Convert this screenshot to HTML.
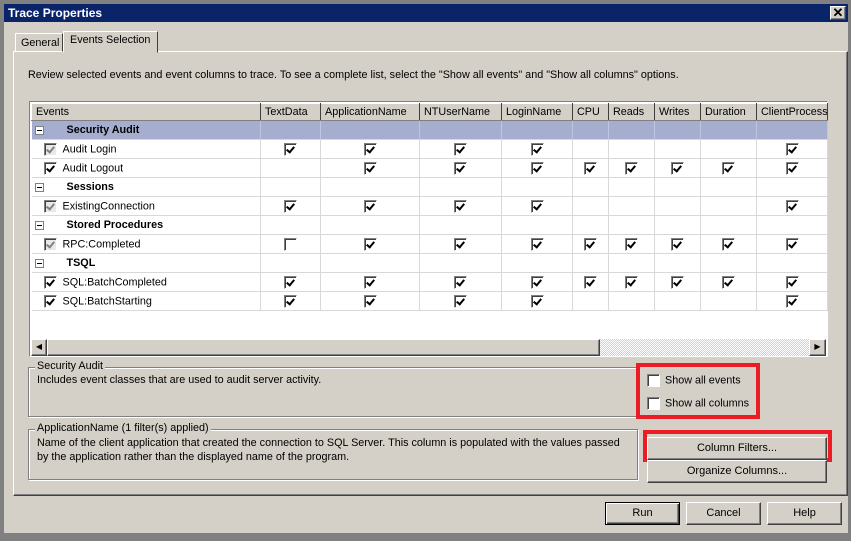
<!DOCTYPE html>
<html><head><meta charset="utf-8"><style>
*{box-sizing:border-box}
body{margin:0;width:851px;height:541px;overflow:hidden;background:#d4d0c8;font-family:"Liberation Sans",sans-serif;font-size:10.8px;color:#000;position:relative}
.a{position:absolute}
.raised{border:1px solid;border-color:#fff #404040 #404040 #fff;box-shadow:inset -1px -1px #808080}
.sunk{border:1px solid;border-color:#808080 #fff #fff #808080}
table{border-collapse:collapse;table-layout:fixed;position:absolute;left:31px;top:103px;width:796px;background:#fff}
td{height:19px;padding:0;border-right:1px solid #d8d8d8;border-bottom:1px solid #d8d8d8;text-align:center;vertical-align:middle;white-space:nowrap;overflow:hidden}
th{height:17px;font-weight:normal;background:#d4d0c8;border:1px solid;border-color:#fff #404040 #808080 #fff;padding:0 0 0 4px;text-align:left;white-space:nowrap;overflow:hidden}
td.n{text-align:left;padding-left:3px}
.cb{display:inline-block;width:13px;height:13px;border:1px solid;border-color:#808080 #fff #fff #808080;box-shadow:inset 1px 1px #404040;background:#fff;position:relative;vertical-align:middle}
.cb.c::after{content:"";position:absolute;left:3px;top:1px;width:3px;height:6px;border:solid #000;border-width:0 2px 2px 0;transform:rotate(40deg)}
.cb.g::after{border-color:#808080}
.cb.g{background:#e8e8e8}
.cat td{font-weight:bold}
.hl td{background:#a6aed0;border-right-color:#c0c6e0}
.pm{display:inline-block;width:9px;height:9px;border:1px solid #808080;background:#fff;position:relative;vertical-align:middle;margin-right:23px}
.pm::after{content:"";position:absolute;left:1px;top:3px;width:5px;height:1px;background:#000}
.btn{position:absolute;height:23px;text-align:center;line-height:21px;font-size:11px}
.gb{position:absolute;border:1px solid #808080;box-shadow:1px 1px #fff, inset 1px 1px #fff}
.gl{position:absolute;top:-8px;left:6px;background:#d4d0c8;padding:0 2px}
.ev{margin-left:5px}
</style></head><body>
<div class="a" style="left:0;top:0;width:851px;height:541px;border:4px solid #808080;border-top-width:4px;border-bottom-width:8px;border-right-width:3px"></div>
<div class="a" style="left:4px;top:4px;width:844px;height:18px;background:#0a246a;color:#fff;font-weight:bold;font-size:12px;line-height:18px;padding-left:4px">Trace Properties</div>
<div class="a raised" style="left:830px;top:6px;width:16px;height:14px;background:#d4d0c8;text-align:center;line-height:11px;font-size:13px;font-weight:bold">✕</div>
<div class="a raised" style="left:13px;top:51px;width:835px;height:445px"></div>
<div class="a" style="left:15px;top:33px;width:48px;height:19px;border:1px solid;border-color:#fff #404040 transparent #fff;padding:3px 0 0 5px">General</div>
<div class="a" style="left:63px;top:31px;width:95px;height:22px;border:1px solid;border-color:#fff #404040 transparent #fff;background:#d4d0c8;padding:2px 0 0 6px">Events Selection</div>
<div class="a" style="left:28px;top:69px">Review selected events and event columns to trace. To see a complete list, select the "Show all events" and "Show all columns" options.</div>
<div class="a sunk" style="left:29px;top:101px;width:799px;height:256px;background:#fff"></div>
<table>
<colgroup><col style="width:229px"><col style="width:60px"><col style="width:99px"><col style="width:82px"><col style="width:71px"><col style="width:36px"><col style="width:46px"><col style="width:46px"><col style="width:56px"><col style="width:71px"></colgroup>
<tr><th>Events</th><th>TextData</th><th>ApplicationName</th><th>NTUserName</th><th>LoginName</th><th>CPU</th><th>Reads</th><th>Writes</th><th>Duration</th><th>ClientProcess</th></tr>
<tr class="cat hl"><td class="n"><span class="pm"></span>Security Audit</td><td></td><td></td><td></td><td></td><td></td><td></td><td></td><td></td><td></td></tr>
<tr><td class="n">&nbsp;&nbsp;&nbsp;<span class="cb c g"></span>&nbsp;&nbsp;<span>Audit Login</span></td><td><span class="cb c"></span></td><td><span class="cb c"></span></td><td><span class="cb c"></span></td><td><span class="cb c"></span></td><td></td><td></td><td></td><td></td><td><span class="cb c"></span></td></tr>
<tr><td class="n">&nbsp;&nbsp;&nbsp;<span class="cb c"></span>&nbsp;&nbsp;<span>Audit Logout</span></td><td></td><td><span class="cb c"></span></td><td><span class="cb c"></span></td><td><span class="cb c"></span></td><td><span class="cb c"></span></td><td><span class="cb c"></span></td><td><span class="cb c"></span></td><td><span class="cb c"></span></td><td><span class="cb c"></span></td></tr>
<tr class="cat"><td class="n"><span class="pm"></span>Sessions</td><td></td><td></td><td></td><td></td><td></td><td></td><td></td><td></td><td></td></tr>
<tr><td class="n">&nbsp;&nbsp;&nbsp;<span class="cb c g"></span>&nbsp;&nbsp;<span>ExistingConnection</span></td><td><span class="cb c"></span></td><td><span class="cb c"></span></td><td><span class="cb c"></span></td><td><span class="cb c"></span></td><td></td><td></td><td></td><td></td><td><span class="cb c"></span></td></tr>
<tr class="cat"><td class="n"><span class="pm"></span>Stored Procedures</td><td></td><td></td><td></td><td></td><td></td><td></td><td></td><td></td><td></td></tr>
<tr><td class="n">&nbsp;&nbsp;&nbsp;<span class="cb c g"></span>&nbsp;&nbsp;<span>RPC:Completed</span></td><td><span class="cb"></span></td><td><span class="cb c"></span></td><td><span class="cb c"></span></td><td><span class="cb c"></span></td><td><span class="cb c"></span></td><td><span class="cb c"></span></td><td><span class="cb c"></span></td><td><span class="cb c"></span></td><td><span class="cb c"></span></td></tr>
<tr class="cat"><td class="n"><span class="pm"></span>TSQL</td><td></td><td></td><td></td><td></td><td></td><td></td><td></td><td></td><td></td></tr>
<tr><td class="n">&nbsp;&nbsp;&nbsp;<span class="cb c"></span>&nbsp;&nbsp;<span>SQL:BatchCompleted</span></td><td><span class="cb c"></span></td><td><span class="cb c"></span></td><td><span class="cb c"></span></td><td><span class="cb c"></span></td><td><span class="cb c"></span></td><td><span class="cb c"></span></td><td><span class="cb c"></span></td><td><span class="cb c"></span></td><td><span class="cb c"></span></td></tr>
<tr><td class="n">&nbsp;&nbsp;&nbsp;<span class="cb c"></span>&nbsp;&nbsp;<span>SQL:BatchStarting</span></td><td><span class="cb c"></span></td><td><span class="cb c"></span></td><td><span class="cb c"></span></td><td><span class="cb c"></span></td><td></td><td></td><td></td><td></td><td><span class="cb c"></span></td></tr>
</table>
<div class="a" style="left:31px;top:339px;width:795px;height:17px;background:repeating-conic-gradient(#d4d0c8 0 25%,#fff 0 50%) 0 0/2px 2px"></div>
<div class="a raised" style="left:31px;top:339px;width:16px;height:17px;background:#d4d0c8;font-size:8px;line-height:14px;text-align:center">◀</div>
<div class="a raised" style="left:47px;top:339px;width:553px;height:17px;background:#d4d0c8"></div>
<div class="a raised" style="left:809px;top:339px;width:17px;height:17px;background:#d4d0c8;font-size:8px;line-height:14px;text-align:center">▶</div>
<div class="gb" style="left:28px;top:367px;width:610px;height:50px"><span class="gl">Security Audit</span><div class="a" style="left:8px;top:6px">Includes event classes that are used to audit server activity.</div></div>
<div class="gb" style="left:28px;top:429px;width:610px;height:51px"><span class="gl">ApplicationName (1 filter(s) applied)</span><div class="a" style="left:8px;top:6px;line-height:14px;white-space:nowrap">Name of the client application that created the connection to SQL Server. This column is populated with the values passed<br>by the application rather than the displayed name of the program.</div></div>
<div class="a" style="left:636px;top:363px;width:124px;height:56px;border:4px solid #ec1c24"></div>
<div class="a" style="left:647px;top:374px"><span class="cb" style="margin-right:5px"></span>Show all events</div>
<div class="a" style="left:647px;top:397px"><span class="cb" style="margin-right:5px"></span>Show all columns</div>
<div class="a" style="left:643px;top:430px;width:189px;height:32px;border:4px solid #ec1c24"></div>
<div class="btn raised" style="left:647px;top:437px;width:180px;background:#d4d0c8">Column Filters...</div>
<div class="btn raised" style="left:647px;top:460px;width:180px;background:#d4d0c8">Organize Columns...</div>
<div class="btn" style="left:605px;top:502px;width:75px;border:1px solid #000;box-shadow:inset 1px 1px #fff,inset -1px -1px #404040,inset -2px -2px #808080">Run</div>
<div class="btn raised" style="left:686px;top:502px;width:75px">Cancel</div>
<div class="btn raised" style="left:767px;top:502px;width:75px">Help</div>
</body></html>
